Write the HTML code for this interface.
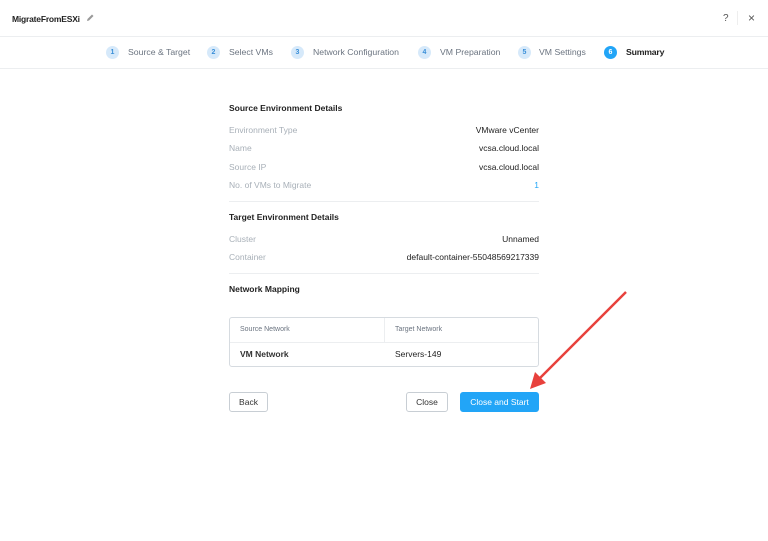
<!DOCTYPE html>
<html><head><style>
*{margin:0;padding:0;box-sizing:border-box}
body{width:768px;height:541px;background:#fff;font-family:"Liberation Sans",sans-serif;position:relative;overflow:hidden;color:#222}
.a{position:absolute;white-space:nowrap}
.hd{position:absolute;left:0;top:0;width:768px;height:37px;border-bottom:1px solid #eceef0}
.st{position:absolute;left:0;top:37px;width:768px;height:32px;border-bottom:1px solid #eceef0}
.n{position:absolute;width:13px;height:13px;border-radius:50%;background:#d6e9fa;color:#3a8fd8;font-size:7px;font-weight:bold;text-align:center;line-height:13px;top:46px}
.sl{position:absolute;top:47px;font-size:8.7px;color:#6b7480;white-space:nowrap}
.t{position:absolute;left:229px;font-size:8.5px;font-weight:bold;color:#222}
.l{position:absolute;left:229px;font-size:8.5px;color:#a8b0b8}
.v{position:absolute;right:229px;font-size:8.5px;color:#222}
.hr{position:absolute;left:229px;width:310px;height:1px;background:#eceef0}
.btn{position:absolute;top:392px;height:20px;border:1px solid #c8ced4;border-radius:3px;font-size:8.5px;text-align:center;line-height:18px;background:#fff;color:#333}
</style></head><body>
<div class="hd"></div>
<div class="a" style="left:12px;top:14px;font-size:8.5px;font-weight:bold;letter-spacing:-0.2px">MigrateFromESXi</div>
<svg class="a" style="left:86px;top:13px" width="9" height="9" viewBox="0 0 9 9"><path d="M1 8 L1.5 6 L6 1.5 L7.5 3 L3 7.5 Z" fill="#999"/></svg>
<div class="a" style="left:723px;top:13px;font-size:10px;color:#555">?</div>
<div class="a" style="left:737px;top:11px;width:1px;height:14px;background:#eee"></div>
<div class="a" style="left:748px;top:11px;font-size:12px;color:#555">×</div>
<div class="st"></div>
<div class="n" style="left:106px">1</div><div class="sl" style="left:128px">Source &amp; Target</div>
<div class="n" style="left:207px">2</div><div class="sl" style="left:229px">Select VMs</div>
<div class="n" style="left:291px">3</div><div class="sl" style="left:313px">Network Configuration</div>
<div class="n" style="left:418px">4</div><div class="sl" style="left:440px">VM Preparation</div>
<div class="n" style="left:518px">5</div><div class="sl" style="left:539px">VM Settings</div>
<div class="n" style="left:604px;background:#22a5f7;color:#fff">6</div><div class="sl" style="left:626px;color:#222;font-weight:bold;letter-spacing:-0.2px">Summary</div>

<div class="t" style="top:103px">Source Environment Details</div>
<div class="l" style="top:125px">Environment Type</div><div class="v" style="top:125px">VMware vCenter</div>
<div class="l" style="top:143px">Name</div><div class="v" style="top:143px">vcsa.cloud.local</div>
<div class="l" style="top:162px">Source IP</div><div class="v" style="top:162px">vcsa.cloud.local</div>
<div class="l" style="top:180px">No. of VMs to Migrate</div><div class="v" style="top:180px;color:#22a5f7">1</div>
<div class="hr" style="top:201px"></div>
<div class="t" style="top:212px">Target Environment Details</div>
<div class="l" style="top:234px">Cluster</div><div class="v" style="top:234px">Unnamed</div>
<div class="l" style="top:252px">Container</div><div class="v" style="top:252px">default-container-55048569217339</div>
<div class="hr" style="top:273px"></div>
<div class="t" style="top:284px">Network Mapping</div>
<div class="a" style="left:229px;top:317px;width:310px;height:50px;border:1px solid #d6dbe0;border-radius:3px"></div>
<div class="a" style="left:230px;top:342px;width:308px;height:1px;background:#eceef0"></div>
<div class="a" style="left:384px;top:318px;width:1px;height:24px;background:#eceef0"></div>
<div class="a" style="left:240px;top:326px;font-size:7px;color:#6b7480">Source Network</div>
<div class="a" style="left:395px;top:326px;font-size:7px;color:#6b7480">Target Network</div>
<div class="a" style="left:240px;top:349px;font-size:8.5px;font-weight:bold;color:#333">VM Network</div>
<div class="a" style="left:395px;top:349px;font-size:8.5px;color:#222">Servers-149</div>
<div class="btn" style="left:229px;width:39px">Back</div>
<div class="btn" style="left:406px;width:42px">Close</div>
<div class="btn" style="left:460px;width:79px;background:#22a5f7;border-color:#22a5f7;color:#fff">Close and Start</div>
<svg class="a" style="left:0;top:0" width="768" height="541"><line x1="626" y1="292" x2="538" y2="380" stroke="#e8413c" stroke-width="2.5"/><path d="M530 389 L535 372 L546 383 Z" fill="#e8413c"/></svg>
</body></html>
